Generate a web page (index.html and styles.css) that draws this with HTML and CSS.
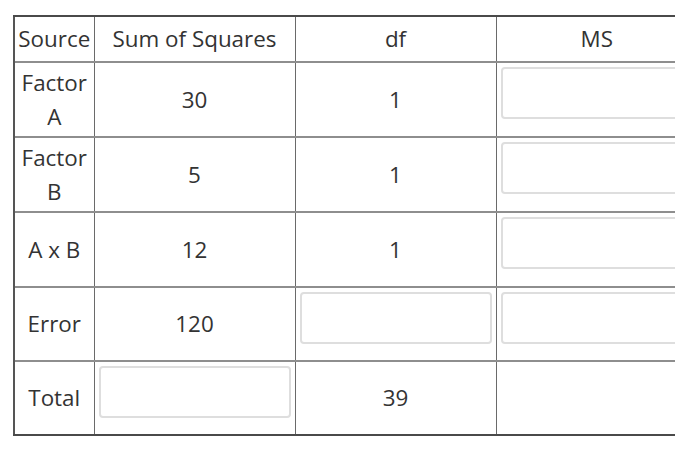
FILE: index.html
```html
<!DOCTYPE html>
<html>
<head>
<meta charset="utf-8">
<link rel="stylesheet" href="styles.css">
</head>
<body>
<div class="wrap">
  <table class="anova">
    <colgroup>
      <col class="c-src"><col class="c-ss"><col class="c-df"><col class="c-ms">
    </colgroup>
    <thead>
      <tr class="head">
        <th>Source</th><th>Sum of Squares</th><th>df</th><th>MS</th>
      </tr>
    </thead>
    <tbody>
      <tr class="row">
        <td>Factor<br>A</td><td>30</td><td>1</td><td class="in"><input type="text"></td>
      </tr>
      <tr class="row">
        <td>Factor<br>B</td><td>5</td><td>1</td><td class="in"><input type="text"></td>
      </tr>
      <tr class="row">
        <td>A x B</td><td>12</td><td>1</td><td class="in"><input type="text"></td>
      </tr>
      <tr class="row short">
        <td>Error</td><td>120</td><td class="in"><input type="text"></td><td class="in"><input type="text"></td>
      </tr>
      <tr class="row short last">
        <td>Total</td><td class="in"><input type="text"></td><td>39</td><td></td>
      </tr>
    </tbody>
  </table>
</div>
</body>
</html>
```

FILE: styles.css
```css
html, body {
  margin: 0;
  padding: 0;
  background: #fff;
}
.wrap {
  margin: 15px 0 0 13px;
  width: 662px;
  overflow: hidden;
}
.anova {
  border-collapse: collapse;
  table-layout: fixed;
  width: 683px;
  font-family: "Open Sans", "Noto Sans", sans-serif;
  font-size: 22.4px;
  color: #333;
  line-height: 34px;
}
.c-src { width: 80px; }
.c-ss { width: 201px; }
.c-df { width: 201px; }
.c-ms { width: 201px; }
.anova th, .anova td {
  text-align: center;
  vertical-align: middle;
  padding: 0 4px;
  border-left: 1px solid #6a6a6a;
  border-top: 2px solid #8e8e8e;
  font-weight: normal;
  white-space: nowrap;
}
.anova tr > :first-child {
  border-left: 2px solid #555;
  padding: 0 1px;
}
.head {
  height: 46px;
}
.head th {
  border-top: 2px solid #4a4a4a;
}
.row {
  height: 75px;
}
.row.short {
  height: 74px;
}
.last td {
  border-bottom: 2px solid #4a4a4a;
}
.anova td.in {
  vertical-align: top;
  padding: 4px 4px 0;
}
.in input {
  display: block;
  box-sizing: border-box;
  width: 100%;
  height: 52px;
  margin: 0;
  border: 2px solid #dedede;
  border-radius: 4px;
  background: #fff;
  font: inherit;
  outline: none;
}
```
